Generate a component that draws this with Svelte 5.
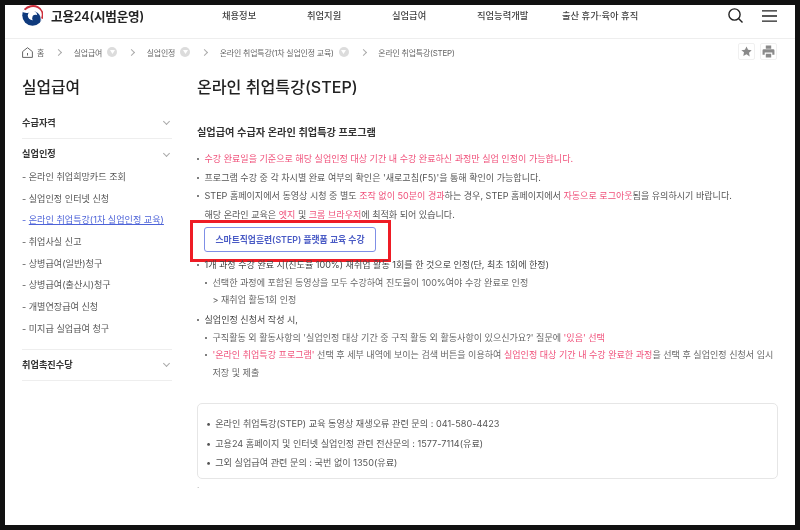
<script>
  const nav = ['채용정보', '취업지원', '실업급여', '직업능력개발', '출산 휴가·육아 휴직'];
  const crumbs = ['실업급여', '실업인정', '온라인 취업특강(1차 실업인정 교육)'];
  const sideItems = [
    '온라인 취업희망카드 조회',
    '실업인정 인터넷 신청',
    '온라인 취업특강(1차 실업인정 교육)',
    '취업사실 신고',
    '상병급여(일반)청구',
    '상병급여(출산시)청구',
    '개별연장급여 신청',
    '미지급 실업급여 청구'
  ];
  const contacts = [
    '온라인 취업특강(STEP) 교육 동영상 재생오류 관련 문의 : 041-580-4423',
    '고용24 홈페이지 및 인터넷 실업인정 관련 전산문의 : 1577-7114(유료)',
    '그외 실업급여 관련 문의 : 국번 없이 1350(유료)'
  ];
</script>

<div class="frame">
  <div class="page">
    <header>
      <div class="brand">
        <svg width="21" height="21" viewBox="0 0 40 40">
          <circle cx="20" cy="20" r="19.500" fill="#0f3a7d" />
          <path d="M1 14C5 3 16-2 26 1c10 3 16 14 13 25l-4 6c2-8-1-16-9-19-8-3-12 3-17 2-4 0-7-1-8-1Z" fill="#fff" />
          <path d="M5 9C11 2 22 0 30 4c8 4 11 13 8 22" fill="none" stroke="#cd2e3a" stroke-width="3.500" />
          <circle cx="20" cy="20" r="9" fill="#fff" />
          <circle cx="26" cy="25" r="6.500" fill="#0f3a7d" />
        </svg>
        <strong>고용24(시범운영)</strong>
      </div>
      <nav>
        {#each nav as item}
          <span>{item}</span>
        {/each}
      </nav>
      <div class="tools">
        <svg width="15" height="15" viewBox="0 0 15 15" fill="none" stroke="#222" stroke-width="1.400">
          <circle cx="6.500" cy="6.500" r="5.600" />
          <path d="M10.500 10.500 14.500 14.500" />
        </svg>
        <svg width="15" height="12" viewBox="0 0 15 12" fill="none" stroke="#222" stroke-width="1.300">
          <path d="M0 .8h15M0 6h15M0 11.200h15" />
        </svg>
      </div>
    </header>

    <div class="crumbs">
      <svg class="home" width="11" height="11" viewBox="0 0 11 11" fill="none" stroke="#555" stroke-width=".9">
        <path d="M.6 4.600 5.500.7l4.900 3.900v5.800H.6Z" />
        <path d="M5.500 6v2.500" />
      </svg>
      <span>홈</span>
      <i class="sep"></i>
      {#each crumbs as crumb}
        <span>{crumb}</span>
        <b class="dot">
          <svg width="5" height="4" viewBox="0 0 5 4"><path d="M0 0h5L2.500 4Z" fill="#fff" /></svg>
        </b>
        <i class="sep"></i>
      {/each}
      <span>온라인 취업특강(STEP)</span>
      <div class="actions">
        <button aria-label="즐겨찾기">
          <svg width="11" height="11" viewBox="0 0 24 24"><path d="m12 1 3.400 7.300 7.900 1-5.800 5.500 1.500 7.900L12 17.800l-7 3.900 1.500-7.900L.7 9.300l7.900-1Z" fill="#8a8a8a" /></svg>
        </button>
        <button aria-label="인쇄">
          <svg width="13" height="13" viewBox="0 0 24 24"><path d="M7 1h10v6H7ZM3 8h18a2 2 0 0 1 2 2v8h-4v-4H5v4H1v-8a2 2 0 0 1 2-2ZM7 16h10v7H7Z" fill="#8a8a8a" /></svg>
        </button>
      </div>
    </div>

    <div class="body">
      <aside>
        <h2>실업급여</h2>
        <div class="group first">
          <div class="group-head"><span>수급자격</span><i class="chev"></i></div>
        </div>
        <div class="group">
          <div class="group-head"><span>실업인정</span><i class="chev"></i></div>
          <ul>
            {#each sideItems as item, i}
              <li class:active={i === 2}>- <span>{item}</span></li>
            {/each}
          </ul>
        </div>
        <div class="group">
          <div class="group-head"><span>취업촉진수당</span><i class="chev"></i></div>
        </div>
      </aside>

      <main>
        <h1>온라인 취업특강(STEP)</h1>
        <h3>실업급여 수급자 온라인 취업특강 프로그램</h3>
        <ul class="notes">
          <li class="red">수강 완료일을 기준으로 해당 실업인정 대상 기간 내 수강 완료하신 과정만 실업 인정이 가능합니다.</li>
          <li>프로그램 수강 중 각 차시별 완료 여부의 확인은 '새로고침(F5)'을 통해 확인이 가능합니다.</li>
          <li>STEP 홈페이지에서 동영상 시청 중 별도 <em>조작 없이 50분이 경과</em>하는 경우, STEP 홈페이지에서 <em>자동으로 로그아웃</em>됨을 유의하시기 바랍니다.<br />
            해당 온라인 교육은 <em>엣지</em> 및 <em>크롬 브라우저</em>에 최적화 되어 있습니다.</li>
        </ul>
        <div class="cta-wrap">
          <button class="cta">스마트직업훈련(STEP) 플랫폼 교육 수강</button>
          <div class="annotation"></div>
        </div>
        <ul class="notes lower">
          <li class="dark">1개 과정 수강 완료 시(진도율 100%) 재취업 활동 1회를 한 것으로 인정(단, 최초 1회에 한정)
            <ul>
              <li>선택한 과정에 포함된 동영상을 모두 수강하여 진도율이 100%여야 수강 완료로 인정<br />&gt; 재취업 활동1회 인정</li>
            </ul>
          </li>
          <li class="dark gap">실업인정 신청서 작성 시,
            <ul>
              <li>구직활동 외 활동사항의 '실업인정 대상 기간 중 구직 활동 외 활동사항이 있으신가요?' 질문에 <em>'있음' 선택</em></li>
              <li><em>'온라인 취업특강 프로그램'</em> 선택 후 세부 내역에 보이는 검색 버튼을 이용하여 <em>실업인정 대상 기간 내 수강 완료한 과정</em>을 선택 후 실업인정 신청서 임시<br />저장 및 제출</li>
            </ul>
          </li>
        </ul>
        <ul class="contact">
          {#each contacts as line}
            <li>{line}</li>
          {/each}
        </ul>
        <p class="tail">.</p>
      </main>
    </div>
  </div>
</div>

<style>
  :global(body) {
    margin: 0;
    background: #111;
  }

  .frame {
    width: 800px;
    height: 530px;
    box-sizing: border-box;
    padding: 5px;
    background: #111;
    overflow: hidden;
    font-family: Inter, "Noto Sans CJK KR", sans-serif;
    color: #333;
  }

  .page {
    height: 520px;
    background: #fff;
    overflow: hidden;
    filter: blur(0.3px);
  }

  header {
    display: flex;
    align-items: center;
    box-sizing: border-box;
    height: 34px;
    padding: 0 18px 12px 17px;
    border-bottom: 1px solid #eee;
  }

  .brand {
    display: flex;
    align-items: center;
    gap: 8px;
    width: 200px;
  }

  .brand strong {
    font-size: 12.600px;
    font-weight: 600;
    letter-spacing: -0.2px;
    color: #222;
  }

  nav {
    display: flex;
    flex: 1;
    margin-bottom: 2px;
    font-size: 9.300px;
    font-weight: 500;
    color: #444;
  }

  nav span {
    width: 85px;
    white-space: nowrap;
  }

  .tools {
    display: flex;
    align-items: center;
    gap: 19px;
  }

  .crumbs {
    display: flex;
    align-items: center;
    height: 26px;
    padding: 0 18px 0 17px;
    font-size: 7.950px;
    color: #666;
    letter-spacing: -0.2px;
  }

  .home {
    margin-right: 4px;
  }

  .sep {
    width: 4px;
    height: 4px;
    margin: 0 12.300px;
    border-top: 1px solid #aaa;
    border-right: 1px solid #aaa;
    transform: rotate(45deg);
  }

  .dot {
    display: flex;
    align-items: center;
    justify-content: center;
    width: 10px;
    height: 10px;
    margin-left: 5px;
    border-radius: 50%;
    background: #dcdcdc;
  }

  .actions {
    display: flex;
    gap: 5px;
    margin: -2px 0 0 auto;
  }

  .actions button {
    display: flex;
    align-items: center;
    justify-content: center;
    width: 17px;
    height: 17px;
    padding: 0;
    background: #fff;
    border: 1px solid #f0f0f0;
    border-radius: 2px;
  }

  .body {
    display: flex;
    padding: 0 17px;
    gap: 25px;
  }

  aside {
    width: 150px;
    flex: none;
  }

  h2 {
    margin: 11px 0 6px;
    font-size: 15.800px;
    line-height: 24px;
    font-weight: 500;
    color: #222;
  }

  .group {
    padding: 6.500px 0 9px;
    border-bottom: 1px solid #eee;
  }

  .group.first {
    padding-top: 8px;
  }

  .group-head {
    display: flex;
    align-items: center;
    justify-content: space-between;
    height: 15px;
    font-size: 9.200px;
    font-weight: 600;
    color: #333;
  }

  .chev {
    width: 4px;
    height: 4px;
    margin-right: 3px;
    border-right: 1px solid #aaa;
    border-bottom: 1px solid #aaa;
    transform: rotate(45deg);
  }

  aside ul {
    list-style: none;
    margin: 5.500px 0 0;
    padding: 0;
    font-size: 9.100px;
    color: #555;
  }

  aside li {
    height: 21.700px;
    line-height: 21.700px;
    white-space: nowrap;
  }

  aside li.active {
    color: #4d63d8;
  }

  aside li.active span {
    text-decoration: underline;
  }

  main {
    flex: 1;
    min-width: 0;
  }

  h1 {
    margin: 10px 0 25px;
    font-size: 16.100px;
    line-height: 24px;
    font-weight: 500;
    color: #222;
  }

  h3 {
    margin: 0 0 10px;
    font-size: 10.200px;
    line-height: 16px;
    font-weight: 600;
    color: #333;
  }

  ul.notes {
    list-style: none;
    margin: 0;
    padding: 0;
    font-size: 9.050px;
    line-height: 18.700px;
    color: #555;
    white-space: nowrap;
  }

  ul.notes li {
    position: relative;
    padding-left: 7.500px;
  }

  ul.notes ul li {
    padding-left: 8px;
  }

  ul.notes li::before {
    content: "";
    position: absolute;
    left: 0;
    top: 8px;
    width: 2px;
    height: 2px;
    border-radius: 50%;
    background: #555;
  }

  ul.notes li.red,
  em {
    color: #f0507a;
    font-style: normal;
  }

  ul.notes.lower {
    line-height: 17.500px;
  }

  ul.notes li.dark {
    color: #444;
  }

  ul.notes ul {
    list-style: none;
    margin: 0;
    padding: 0;
    color: #666;
  }

  ul.notes li.gap {
    margin-top: 2.500px;
  }

  .cta-wrap {
    position: relative;
    margin: 2.200px 0 4px 7px;
    width: 172px;
  }

  .cta {
    display: block;
    width: 172px;
    height: 25px;
    padding: 0;
    background: #fff;
    border: 1px solid #7f8fe6;
    border-radius: 3px;
    font: 600 8.800px Inter, "Noto Sans CJK KR", sans-serif;
    color: #4a5bc5;
  }

  .annotation {
    position: absolute;
    left: -14px;
    top: -7px;
    width: 201px;
    height: 42px;
    box-sizing: border-box;
    border: 3px solid #ee1c25;
  }

  ul.contact {
    list-style: none;
    box-sizing: border-box;
    margin: 22px 0 0;
    padding: 10px 0 0 16px;
    height: 76px;
    border: 1px solid #e6e6e6;
    border-radius: 5px;
    font-size: 9.150px;
    line-height: 19.500px;
    color: #555;
  }

  ul.contact li::before {
    content: "•";
    margin-left: -8px;
    margin-right: 4px;
  }

  .tail {
    margin: 0;
    font-size: 8px;
    line-height: 12px;
    color: #999;
  }
</style>
